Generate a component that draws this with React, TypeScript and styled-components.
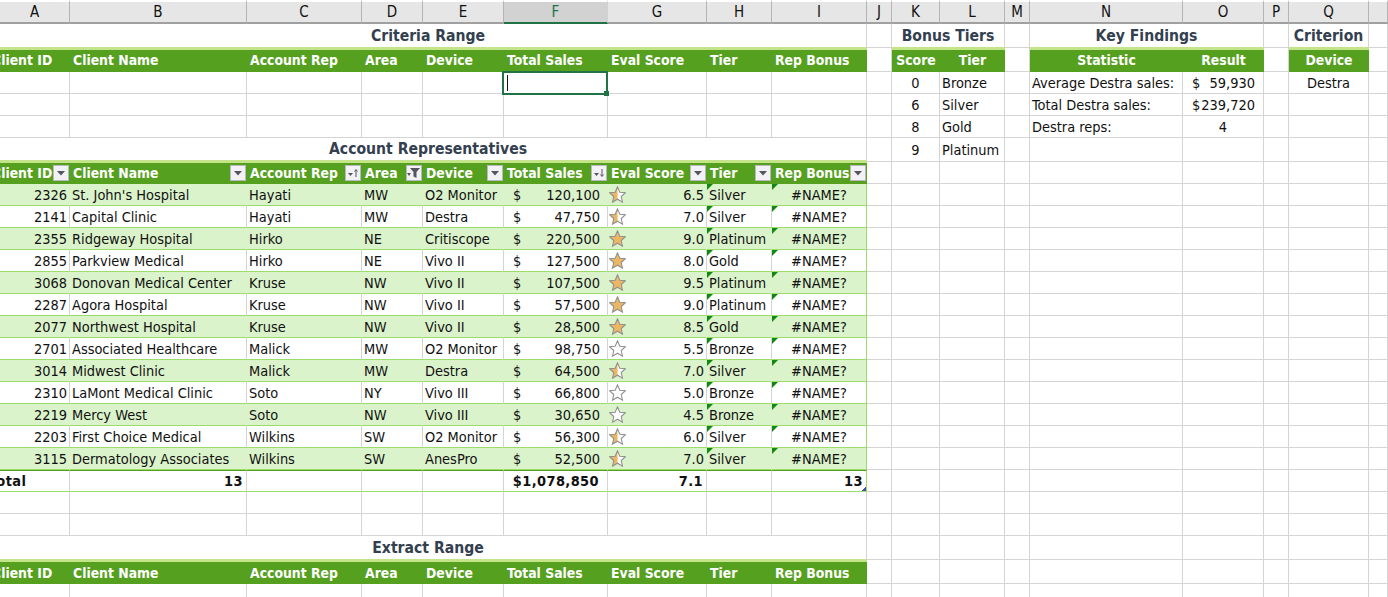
import React from "react";
import styled, { createGlobalStyle, css } from "styled-components";

const COLS = "70px 177px 115px 61px 81px 104px 99px 65px 95px 25px 48px 65px 25px 153px 81px 25px 80px 19px";
const FONT = `"DejaVu Sans Condensed", "DejaVu Sans", "Noto Sans", sans-serif`;
const GRID = "#d4d4d4";
const GREEN = "#55a11f";
const STRIP = "#c4e48a";
const BAND = "#dbf3cb";
const RULE = "#9bdc6a";

const Global = createGlobalStyle`
  html, body { margin: 0; padding: 0; background: #fff; overflow: hidden; }
  body { font-family: ${FONT}; font-size: 14.45px; color: #111; }
`;

const Sheet = styled.div`
  width: 1388px;
  height: 597px;
  overflow: hidden;
  position: relative;
`;

const Row = styled.div<{ $h: number }>`
  display: grid;
  grid-template-columns: ${COLS};
  height: ${(p) => p.$h}px;
`;

const ColHead = styled.div<{ $active?: boolean }>`
  background: ${(p) => (p.$active ? "#d2d2d2" : "#e6e6e6")};
  color: ${(p) => (p.$active ? "#217346" : "#111")};
  border-top: 2px solid #fff;
  border-right: 1px solid ${(p) => (p.$active ? "#d2d2d2" : "#b4b4b4")};
  border-bottom: ${(p) => (p.$active ? "2px solid #217346" : "2px solid #a0a0a0")};
  box-sizing: border-box;
  display: flex;
  align-items: center;
  justify-content: center;
  font-size: 15px;
`;

const cellBase = css`
  box-sizing: border-box;
  display: flex;
  align-items: center;
  white-space: nowrap;
  overflow: hidden;
  position: relative;
`;

const Blank = styled.div`
  ${cellBase}
  border-right: 1px solid ${GRID};
  border-bottom: 1px solid ${GRID};
`;

const Title = styled.div<{ $span: number; $offset?: number; $strip?: number }>`
  ${cellBase}
  grid-column: span ${(p) => p.$span};
  justify-content: center;
  font-size: 15.6px;
  font-weight: 700;
  color: #33404f;
  padding-right: ${(p) => p.$offset ?? 0}px;
  border-right: 1px solid ${GRID};
  border-bottom: ${(p) => (p.$strip ? `${p.$strip}px solid ${STRIP}` : `1px solid ${GRID}`)};
`;

const Head = styled.div<{ $center?: boolean; $stripTop: number; $clip?: boolean; $drop?: number }>`
  ${cellBase}
  background: ${GREEN};
  color: #fff;
  font-weight: 700;
  font-size: 13.85px;
  border-top: ${(p) => p.$stripTop}px solid ${STRIP};
  justify-content: ${(p) => (p.$center ? "center" : "flex-start")};
  padding-left: ${(p) => (p.$center ? 0 : 3)}px;
  padding-bottom: ${(p) => p.$drop ?? 2}px;
  ${(p) => p.$clip && "text-indent: -8px; padding-left: 0;"}
`;

const FilterBtn = styled.span`
  position: absolute;
  right: 1px;
  top: 2px;
  width: 16px;
  height: 16px;
  box-sizing: border-box;
  background: #f2f2f6;
  border: 1px solid #b8b8c0;
  display: flex;
  align-items: center;
  justify-content: center;
  text-indent: 0;
`;

const Data = styled.div<{ $band: boolean; $align?: "left" | "right" | "center"; $flag?: boolean; $last?: boolean }>`
  ${cellBase}
  background: ${(p) => (p.$band ? BAND : "#fff")};
  border-right: 1px solid ${(p) => (p.$last ? RULE : p.$band ? BAND : GRID)};
  border-bottom: 1px solid ${RULE};
  padding: 0 2px;
  justify-content: ${(p) => (p.$align === "right" ? "flex-end" : p.$align === "center" ? "center" : "flex-start")};
  ${(p) =>
    p.$flag &&
    css`
      &::before {
        content: "";
        position: absolute;
        left: 0;
        top: 0;
        border-top: 6px solid #0f8a0f;
        border-right: 6px solid transparent;
      }
    `}
`;

const Money = styled(Data)`
  justify-content: space-between;
  padding: 0 7px 0 9px;
`;

const ScoreCell = styled(Data)`
  justify-content: space-between;
  padding: 0 2px 0 1px;
`;

const Total = styled.div<{ $align?: "right" | "left"; $last?: boolean; $clip?: boolean; $pad?: number }>`
  ${cellBase}
  font-weight: 700;
  letter-spacing: 0.4px;
  justify-content: ${(p) => (p.$align === "right" ? "flex-end" : "flex-start")};
  padding-right: ${(p) => p.$pad ?? 3}px;
  border-top: 1px solid ${GREEN};
  border-bottom: 1px solid ${RULE};
  border-right: 1px solid ${(p) => (p.$last ? RULE : GRID)};
  ${(p) => p.$clip && "text-indent: -11px;"}
`;

const Side = styled.div<{ $align?: "center" | "left" }>`
  ${cellBase}
  border-right: 1px solid ${GRID};
  border-bottom: 1px solid ${GRID};
  padding: 0 2px;
  justify-content: ${(p) => (p.$align === "left" ? "flex-start" : "center")};
`;

const MoneySide = styled(Side)`
  justify-content: space-between;
  padding: 0 8px 0 9px;
`;

const Selection = styled.div`
  position: absolute;
  left: 502px;
  top: 71px;
  width: 106px;
  height: 24px;
  box-sizing: border-box;
  border: 2px solid #217346;
  &::before {
    content: "";
    position: absolute;
    left: 3px;
    top: 2px;
    width: 1px;
    height: 16px;
    background: #111;
  }
  &::after {
    content: "";
    position: absolute;
    right: -3px;
    bottom: -3px;
    width: 5px;
    height: 5px;
    background: #217346;
  }
`;

const ResizeMark = styled.span`
  position: absolute;
  right: 0;
  bottom: 0;
  width: 4px;
  height: 4px;
  background: linear-gradient(135deg, transparent 50%, #3d55a8 50%);
`;

const Arrow = () => (
  <svg width="8" height="5" viewBox="0 0 8 5"><path d="M0 0h8L4 4.5z" fill="#55555f" /></svg>
);
const SortDown = () => (
  <svg width="12" height="12" viewBox="0 0 12 12">
    <path d="M1 6h5L3.5 9z" fill="#55555f" />
    <path d="M9 2v7M7.5 7.5 9 9.5l1.5-2" stroke="#55555f" fill="none" />
  </svg>
);
const SortUp = () => (
  <svg width="12" height="12" viewBox="0 0 12 12">
    <path d="M1 6h5L3.5 9z" fill="#55555f" />
    <path d="M9 3v7M7.5 4.5 9 2.5l1.5 2" stroke="#55555f" fill="none" />
  </svg>
);
const Funnel = () => (
  <svg width="14" height="12" viewBox="0 0 14 12">
    <path d="M0 6h4L2 9z" fill="#55555f" />
    <path d="M3 1h10L9.5 5v6l-3-1.5V5z" fill="#55555f" />
  </svg>
);

const STAR = "M8 .8l2.2 5 5.3.5-4 3.6 1.2 5.3L8 12.4l-4.7 2.8 1.2-5.3-4-3.6 5.3-.5z";
const Star = ({ level, id }: { level: number; id: string }) => (
  <svg width="17" height="17" viewBox="0 0 16 16" style={{ flex: "none" }}>
    <defs>
      <clipPath id={id}><rect x="0" y="0" width={16 * level} height="16" /></clipPath>
    </defs>
    <path d={STAR} fill="#fff" />
    <path d={STAR} fill="#ecb765" clipPath={`url(#${id})`} />
    <path d={STAR} fill="none" stroke="#8f8f8f" strokeWidth="1" />
  </svg>
);

const letters = ["A","B","C","D","E","F","G","H","I","J","K","L","M","N","O","P","Q",""];
const heads = ["Client ID","Client Name","Account Rep","Area","Device","Total Sales","Eval Score","Tier","Rep Bonus"];
const btnIcons = [<Arrow />, <Arrow />, <SortUp />, <Funnel />, <Arrow />, <SortDown />, <Arrow />, <Arrow />, <Arrow />];

type Rec = [string, string, string, string, string, string, string, string];
const recs: Rec[] = [
  ["2326","St. John's Hospital","Hayati","MW","O2 Monitor","120,100","6.5","Silver"],
  ["2141","Capital Clinic","Hayati","MW","Destra","47,750","7.0","Silver"],
  ["2355","Ridgeway Hospital","Hirko","NE","Critiscope","220,500","9.0","Platinum"],
  ["2855","Parkview Medical","Hirko","NE","Vivo II","127,500","8.0","Gold"],
  ["3068","Donovan Medical Center","Kruse","NW","Vivo II","107,500","9.5","Platinum"],
  ["2287","Agora Hospital","Kruse","NW","Vivo II","57,500","9.0","Platinum"],
  ["2077","Northwest Hospital","Kruse","NW","Vivo II","28,500","8.5","Gold"],
  ["2701","Associated Healthcare","Malick","MW","O2 Monitor","98,750","5.5","Bronze"],
  ["3014","Midwest Clinic","Malick","MW","Destra","64,500","7.0","Silver"],
  ["2310","LaMont Medical Clinic","Soto","NY","Vivo III","66,800","5.0","Bronze"],
  ["2219","Mercy West","Soto","NW","Vivo III","30,650","4.5","Bronze"],
  ["2203","First Choice Medical","Wilkins","SW","O2 Monitor","56,300","6.0","Silver"],
  ["3115","Dermatology Associates","Wilkins","SW","AnesPro","52,500","7.0","Silver"],
];

const starLevel = (s: number) => (s >= 8 ? 1 : s >= 6 ? 0.5 : 0);

const E = () => <Blank />;
const Gap = ({ n }: { n: number }) => (
  <>
    {Array.from({ length: n }, (_, i) => (
      <Blank key={i} />
    ))}
  </>
);

const TableHead = ({ strip, buttons, drop }: { strip: number; buttons?: boolean; drop?: number }) => (
  <>
    {heads.map((h, i) => (
      <Head key={h} $stripTop={strip} $clip={i === 0} $drop={drop}>
        {h}
        {buttons && <FilterBtn>{btnIcons[i]}</FilterBtn>}
      </Head>
    ))}
  </>
);

const Right3 = ({ a, b, c, d, e }: { a?: string; b?: string; c?: string; d?: React.ReactNode; e?: string }) => (
  <>
    <E />
    <Side>{a}</Side>
    <Side $align="left">{b}</Side>
    <E />
    <Side $align="left">{c}</Side>
    {typeof d === "object" ? d : <Side>{d}</Side>}
    <E />
    <Side>{e}</Side>
    <E />
  </>
);

export default function App() {
  return (
    <Sheet>
      <Global />
      <Row $h={24}>
        {letters.map((l, i) => (
          <ColHead key={i} $active={l === "F"}>{l}</ColHead>
        ))}
      </Row>

      <Row $h={24}>
        <Title $span={9} $offset={10} $strip={1}>Criteria Range</Title>
        <E />
        <Title $span={2} $strip={1}>Bonus Tiers</Title>
        <E />
        <Title $span={2} $strip={1}>Key Findings</Title>
        <E />
        <Title $span={1} $strip={1}>Criterion</Title>
        <E />
      </Row>

      <Row $h={24}>
        <TableHead strip={2} />
        <E />
        <Head $center $stripTop={2}>Score</Head>
        <Head $center $stripTop={2}>Tier</Head>
        <E />
        <Head $center $stripTop={2}>Statistic</Head>
        <Head $center $stripTop={2}>Result</Head>
        <E />
        <Head $center $stripTop={2}>Device</Head>
        <E />
      </Row>

      <Row $h={22}>
        <Gap n={9} />
        <Right3 a="0" b="Bronze" c="Average Destra sales:"
          d={<MoneySide><span>$</span><span>59,930</span></MoneySide>} e="Destra" />
      </Row>
      <Row $h={22}>
        <Gap n={9} />
        <Right3 a="6" b="Silver" c="Total Destra sales:"
          d={<MoneySide><span>$</span><span>239,720</span></MoneySide>} />
      </Row>
      <Row $h={22}>
        <Gap n={9} />
        <Right3 a="8" b="Gold" c="Destra reps:" d="4" />
      </Row>

      <Row $h={24}>
        <Title $span={9} $offset={10} $strip={2}>Account Representatives</Title>
        <Right3 a="9" b="Platinum" />
      </Row>

      <Row $h={22}>
        <TableHead strip={1} buttons />
        <Gap n={9} />
      </Row>

      {recs.map((r, i) => {
        const band = i % 2 === 0;
        const score = parseFloat(r[6]);
        return (
          <Row $h={22} key={r[0]}>
            <Data $band={band} $align="right">{r[0]}</Data>
            <Data $band={band}>{r[1]}</Data>
            <Data $band={band}>{r[2]}</Data>
            <Data $band={band}>{r[3]}</Data>
            <Data $band={band}>{r[4]}</Data>
            <Money $band={band}><span>$</span><span>{r[5]}</span></Money>
            <ScoreCell $band={band}><Star level={starLevel(score)} id={`star${i}`} /><span>{r[6]}</span></ScoreCell>
            <Data $band={band} $flag>{r[7]}</Data>
            <Data $band={band} $flag $align="center" $last>#NAME?</Data>
            <Gap n={9} />
          </Row>
        );
      })}

      <Row $h={22}>
        <Total $clip>Total</Total>
        <Total $align="right">13</Total>
        <Total />
        <Total />
        <Total />
        <Total $align="right" $pad={8}>$1,078,850</Total>
        <Total $align="right" $pad={3}>7.1</Total>
        <Total />
        <Total $align="right" $last>13<ResizeMark /></Total>
        <Gap n={9} />
      </Row>
      <Row $h={22}><Gap n={18} /></Row>
      <Row $h={22}><Gap n={18} /></Row>

      <Row $h={24}>
        <Title $span={9} $offset={10} $strip={1}>Extract Range</Title>
        <Gap n={9} />
      </Row>
      <Row $h={24}>
        <TableHead strip={2} drop={0} />
        <Gap n={9} />
      </Row>
      <Row $h={22}><Gap n={18} /></Row>

      <Selection />
    </Sheet>
  );
}
